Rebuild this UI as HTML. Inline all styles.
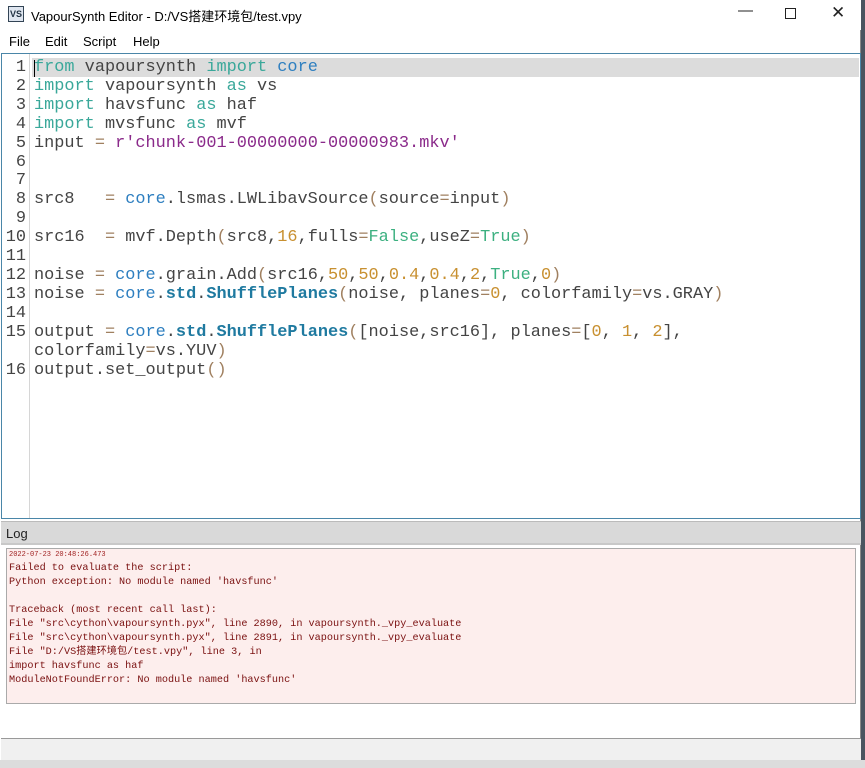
<!DOCTYPE html>
<html><head><meta charset="utf-8"><style>
*{margin:0;padding:0;box-sizing:border-box}
body{width:865px;height:768px;background:#4a5560;position:relative;overflow:hidden;font-family:"Liberation Sans","Noto Sans CJK SC",sans-serif}
#win{position:absolute;left:0;top:0;width:861px;height:760px;background:#fff;border-right:1px solid #888}
#title{position:absolute;left:0;top:0;width:861px;height:30px;background:#fff}
#title .ic{position:absolute;left:8px;top:6px;width:16px;height:16px;border:1px solid #345;background:#dfe6f0;font-size:9px;color:#234;line-height:14px;text-align:center;font-weight:bold}
#title .t{position:absolute;left:31px;top:6px;font-size:13px;color:#000}
.wb{position:absolute;top:4px;font-size:15px;color:#222}
#menu{position:absolute;left:0;top:31px;height:22px;width:861px;font-size:13px;color:#000}
#menu span{position:absolute;top:3px}
#ed{position:absolute;left:1px;top:53px;width:860px;height:466px;border:1px solid #4a86a8;background:#fff}
#gut{position:absolute;left:0;top:0;width:28px;height:464px;border-right:1px solid #d6d6d6}
#hl{position:absolute;left:30px;top:4px;width:827px;height:19px;background:#dcdcdc}
pre{font-family:"Liberation Mono",monospace;font-size:16.9px;line-height:18.9px;color:#444;position:absolute}
#nums{left:0;top:5px;width:24px;text-align:right}
#code{left:32px;top:5px}
.k{color:#3aa89a}.c{color:#2e7fc0}.s{color:#8a2a8a}.n{color:#c89030}.o{color:#a08060}.b{color:#1f7aa0;font-weight:bold}.g{color:#3cb080}
#cur{position:absolute;left:32px;top:6px;width:1px;height:17px;background:#000}
#loghd{position:absolute;left:1px;top:521px;width:860px;height:24px;background:#d9d9d9;border-top:1px solid #bbb;border-bottom:2px solid #c8c8c8;font-size:13px;color:#222}
#loghd span{position:absolute;left:5px;top:4px}
#log{position:absolute;left:6px;top:548px;width:850px;height:156px;background:#fdeeed;border:1px solid #aaa}
#log pre{font-family:"Liberation Mono","Noto Sans CJK SC",monospace;font-size:10.2px;line-height:14px;color:#7a1010;left:2px;top:13px}
#log .ts{position:absolute;left:2px;top:2px;font-size:7px;color:#a02020;font-family:"Liberation Mono",monospace}
#status{position:absolute;left:1px;top:738px;width:860px;height:22px;background:#f0f0f0;border-top:1px solid #999}
#task{position:absolute;left:0;top:760px;width:865px;height:8px;background:#dcdcdc}
</style></head><body>
<div id="win">
<div id="title"><div class="ic">VS</div><div class="t">VapourSynth Editor - D:/VS搭建环境包/test.vpy</div>
<span class="wb" style="left:738px;top:2px">—</span>
<div style="position:absolute;left:785px;top:8px;width:11px;height:11px;border:1px solid #222"></div>
<span class="wb" style="left:831px;top:3px;font-size:17px">✕</span></div>
<div id="menu"><span style="left:9px">File</span><span style="left:45px">Edit</span><span style="left:83px">Script</span><span style="left:133px">Help</span></div>
<div id="ed"><div id="gut"></div><div id="hl"></div><div id="cur"></div>
<pre id="nums">1
2
3
4
5
6
7
8
9
10
11
12
13
14
15

16</pre>
<pre id="code"><span class="k">from</span> vapoursynth <span class="k">import</span> <span class="c">core</span>
<span class="k">import</span> vapoursynth <span class="k">as</span> vs
<span class="k">import</span> havsfunc <span class="k">as</span> haf
<span class="k">import</span> mvsfunc <span class="k">as</span> mvf
input <span class="o">=</span> <span class="s">r'chunk-001-00000000-00000983.mkv'</span>


src8   <span class="o">=</span> <span class="c">core</span>.lsmas.LWLibavSource<span class="o">(</span>source<span class="o">=</span>input<span class="o">)</span>

src16  <span class="o">=</span> mvf.Depth<span class="o">(</span>src8,<span class="n">16</span>,fulls<span class="o">=</span><span class="g">False</span>,useZ<span class="o">=</span><span class="g">True</span><span class="o">)</span>

noise <span class="o">=</span> <span class="c">core</span>.grain.Add<span class="o">(</span>src16,<span class="n">50</span>,<span class="n">50</span>,<span class="n">0.4</span>,<span class="n">0.4</span>,<span class="n">2</span>,<span class="g">True</span>,<span class="n">0</span><span class="o">)</span>
noise <span class="o">=</span> <span class="c">core</span>.<span class="b">std</span>.<span class="b">ShufflePlanes</span><span class="o">(</span>noise, planes<span class="o">=</span><span class="n">0</span>, colorfamily<span class="o">=</span>vs.GRAY<span class="o">)</span>

output <span class="o">=</span> <span class="c">core</span>.<span class="b">std</span>.<span class="b">ShufflePlanes</span><span class="o">(</span>[noise,src16], planes<span class="o">=</span>[<span class="n">0</span>, <span class="n">1</span>, <span class="n">2</span>],
colorfamily<span class="o">=</span>vs.YUV<span class="o">)</span>
output.set_output<span class="o">()</span></pre>
</div>
<div id="loghd"><span>Log</span></div>
<div id="log"><div class="ts">2022-07-23 20:48:26.473</div>
<pre>Failed to evaluate the script:
Python exception: No module named 'havsfunc'

Traceback (most recent call last):
File "src\cython\vapoursynth.pyx", line 2890, in vapoursynth._vpy_evaluate
File "src\cython\vapoursynth.pyx", line 2891, in vapoursynth._vpy_evaluate
File "D:/VS搭建环境包/test.vpy", line 3, in
import havsfunc as haf
ModuleNotFoundError: No module named 'havsfunc'</pre></div>
<div id="status"></div>
</div>
<div id="task"></div>
</body></html>
